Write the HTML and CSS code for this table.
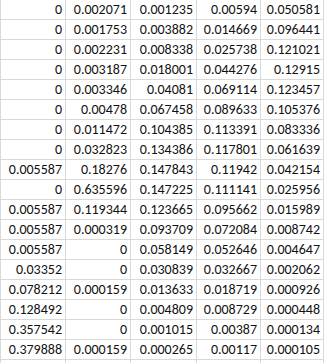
FILE: index.html
```html
<!DOCTYPE html>
<html>
<head>
<meta charset="utf-8">
<link rel="stylesheet" href="styles.css">
</head>
<body>
<div class="sheet">
<div class="c">0</div><div class="c">0.002071</div><div class="c">0.001235</div><div class="c">0.00594</div><div class="c">0.050581</div>
<div class="c">0</div><div class="c">0.001753</div><div class="c">0.003882</div><div class="c">0.014669</div><div class="c">0.096441</div>
<div class="c">0</div><div class="c">0.002231</div><div class="c">0.008338</div><div class="c">0.025738</div><div class="c">0.121021</div>
<div class="c">0</div><div class="c">0.003187</div><div class="c">0.018001</div><div class="c">0.044276</div><div class="c">0.12915</div>
<div class="c">0</div><div class="c">0.003346</div><div class="c">0.04081</div><div class="c">0.069114</div><div class="c">0.123457</div>
<div class="c">0</div><div class="c">0.00478</div><div class="c">0.067458</div><div class="c">0.089633</div><div class="c">0.105376</div>
<div class="c">0</div><div class="c">0.011472</div><div class="c">0.104385</div><div class="c">0.113391</div><div class="c">0.083336</div>
<div class="c">0</div><div class="c">0.032823</div><div class="c">0.134386</div><div class="c">0.117801</div><div class="c">0.061639</div>
<div class="c">0.005587</div><div class="c">0.18276</div><div class="c">0.147843</div><div class="c">0.11942</div><div class="c">0.042154</div>
<div class="c">0</div><div class="c">0.635596</div><div class="c">0.147225</div><div class="c">0.111141</div><div class="c">0.025956</div>
<div class="c">0.005587</div><div class="c">0.119344</div><div class="c">0.123665</div><div class="c">0.095662</div><div class="c">0.015989</div>
<div class="c">0.005587</div><div class="c">0.000319</div><div class="c">0.093709</div><div class="c">0.072084</div><div class="c">0.008742</div>
<div class="c">0.005587</div><div class="c">0</div><div class="c">0.058149</div><div class="c">0.052646</div><div class="c">0.004647</div>
<div class="c">0.03352</div><div class="c">0</div><div class="c">0.030839</div><div class="c">0.032667</div><div class="c">0.002062</div>
<div class="c">0.078212</div><div class="c">0.000159</div><div class="c">0.013633</div><div class="c">0.018719</div><div class="c">0.000926</div>
<div class="c">0.128492</div><div class="c">0</div><div class="c">0.004809</div><div class="c">0.008729</div><div class="c">0.000448</div>
<div class="c">0.357542</div><div class="c">0</div><div class="c">0.001015</div><div class="c">0.00387</div><div class="c">0.000134</div>
<div class="c">0.379888</div><div class="c">0.000159</div><div class="c">0.000265</div><div class="c">0.00117</div><div class="c">0.000105</div>
<div class="c"></div><div class="c"></div><div class="c"></div><div class="c"></div><div class="c"></div>
</div>
</body>
</html>
```
FILE: styles.css
```css
html, body {
  margin: 0;
  padding: 0;
  background: #ffffff;
  overflow: hidden;
}
.sheet {
  display: grid;
  grid-template-columns: 65px 65px 66px 64px 63px;
  grid-auto-rows: 20px;
  width: 323px;
  border-left: 1px solid #d9d9d9;
  font-family: Carlito, Calibri, Lato, "Open Sans", sans-serif;
  font-size: 14px;
  color: #111111;
}
.c {
  box-sizing: border-box;
  border-right: 1px solid #d9d9d9;
  border-bottom: 1px solid #d9d9d9;
  display: flex;
  align-items: flex-end;
  justify-content: flex-end;
  padding: 0 3px 1px 0;
  line-height: 17px;
  white-space: nowrap;
}
```
